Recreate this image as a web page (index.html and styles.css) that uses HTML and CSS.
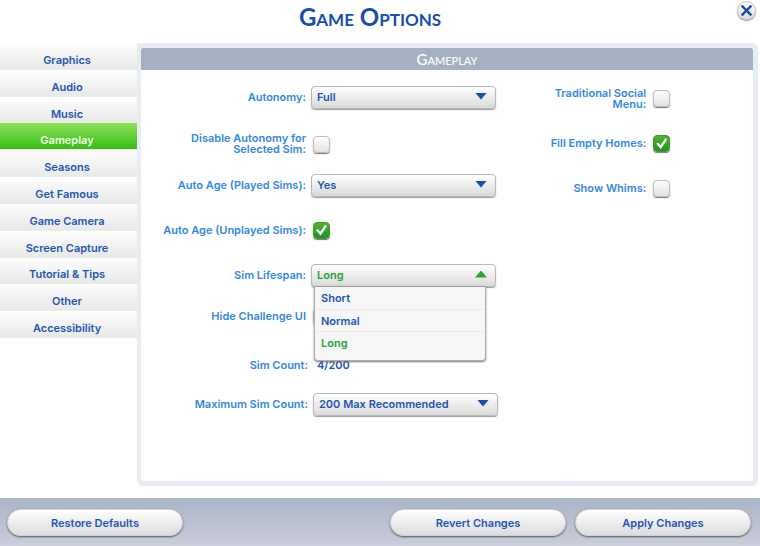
FILE: index.html
```html
<!DOCTYPE html>
<html lang="en">
<head>
  <meta charset="UTF-8" />
  <meta name="viewport" content="width=device-width, initial-scale=1.0" />
  <title>Game Options</title>
  <link rel="stylesheet" href="styles.css">
</head>
<body>
  <header>
    <h1>Game Options</h1>
    <button class="close" type="button" aria-label="Close">
      <svg width="13" height="13" viewBox="0 0 12 12"><path d="M1.5 1.5 L10.5 10.5 M10.5 1.5 L1.5 10.5" stroke="#1a4ba3" stroke-width="2.2" fill="none"/></svg>
    </button>
  </header>

  <main>
    <nav>
      <a href="#">Graphics</a>
      <a href="#">Audio</a>
      <a href="#">Music</a>
      <a href="#" class="active">Gameplay</a>
      <a href="#">Seasons</a>
      <a href="#">Get Famous</a>
      <a href="#">Game Camera</a>
      <a href="#">Screen Capture</a>
      <a href="#">Tutorial &amp; Tips</a>
      <a href="#">Other</a>
      <a href="#">Accessibility</a>
    </nav>

    <section class="panel">
      <h2>Gameplay</h2>
      <form class="options" id="options">
        <div class="main-options">
          <div class="row">
            <label for="autonomy">Autonomy:</label>
            <div class="dropdown">
              <select id="autonomy"><option>Full</option></select>
            </div>
          </div>
          <div class="row">
            <label for="disable-autonomy">Disable Autonomy for<br>Selected Sim:</label>
            <input type="checkbox" id="disable-autonomy">
          </div>
          <div class="row">
            <label for="age-played">Auto Age (Played Sims):</label>
            <div class="dropdown">
              <select id="age-played"><option>Yes</option></select>
            </div>
          </div>
          <div class="row">
            <label for="age-unplayed">Auto Age (Unplayed Sims):</label>
            <input type="checkbox" id="age-unplayed" checked>
          </div>
          <div class="row">
            <label for="lifespan">Sim Lifespan:</label>
            <div class="dropdown open">
              <select id="lifespan">
                <option>Short</option>
                <option>Normal</option>
                <option selected>Long</option>
              </select>
              <ul class="menu">
                <li>Short</li>
                <li>Normal</li>
                <li class="selected">Long</li>
              </ul>
            </div>
          </div>
          <div class="row">
            <label for="hide-challenge">Hide Challenge UI</label>
            <input type="checkbox" id="hide-challenge">
          </div>
          <div class="row count">
            <span class="label">Sim Count:</span>
            <span class="value">4/200</span>
          </div>
          <div class="row count">
            <label for="max-sims">Maximum Sim Count:</label>
            <div class="dropdown">
              <select id="max-sims"><option>200 Max Recommended</option></select>
            </div>
          </div>
        </div>

        <div class="side-options">
          <div class="row">
            <label for="social-menu">Traditional Social<br>Menu:</label>
            <input type="checkbox" id="social-menu">
          </div>
          <div class="row">
            <label for="fill-homes">Fill Empty Homes:</label>
            <input type="checkbox" id="fill-homes" checked>
          </div>
          <div class="row">
            <label for="whims">Show Whims:</label>
            <input type="checkbox" id="whims">
          </div>
        </div>
      </form>
    </section>
  </main>

  <footer>
    <button type="reset" form="options">Restore Defaults</button>
    <div class="actions">
      <button type="button">Revert Changes</button>
      <button type="submit" form="options">Apply Changes</button>
    </div>
  </footer>
</body>
</html>
```
FILE: styles.css
```css
* {
  box-sizing: border-box;
}
body {
  font-family: Inter, "Liberation Sans", sans-serif;
  font-size: 11px;
  font-weight: 600;
  margin: 0;
  min-height: 100vh;
  display: flex;
  flex-direction: column;
  background: white;
  color: #1f55b5;
}
header {
  position: relative;
  height: 43px;
  padding-right: 20px;
}
h1, h2 {
  font-family: Lato, sans-serif;
  font-variant: small-caps;
  text-align: center;
  margin: 0;
}
h1 {
  color: #144fb0;
  font-size: 24px;
  font-weight: 700;
  line-height: 34px;
}
.close {
  position: absolute;
  top: 1px;
  right: 4px;
  width: 19px;
  height: 19px;
  padding: 0;
  display: flex;
  align-items: center;
  justify-content: center;
  border: 1px solid #c4c4c4;
  border-radius: 50%;
  background: linear-gradient(#ffffff, #dedede);
  box-shadow: 0 1px 1px #888;
}
main {
  flex: 1;
  display: flex;
  margin-bottom: 12px;
}
nav {
  flex: 0 0 137px;
  min-height: 295px;
  align-self: flex-start;
  display: grid;
  grid-auto-rows: 1fr;
}
nav a {
  display: flex;
  align-items: center;
  justify-content: center;
  padding: 10px 3px 2px 0;
  line-height: 12px;
  color: #1f55b5;
  text-decoration: none;
  background: linear-gradient(#fefefe, #e9e9e9);
  border-bottom: 1px solid #e6f0e2;
}
nav a.active {
  color: #f2ffe8;
  background: linear-gradient(#8fe35c, #36bb14);
}
.panel {
  flex: 1;
  margin-right: 2px;
  border: 5px solid #e8edf4;
  border-left-width: 4px;
  border-radius: 0 6px 6px 6px;
}
h2 {
  background: #a5b1c2;
  color: white;
  font-size: 15px;
  font-weight: 500;
  line-height: 22px;
  border-radius: 2px 2px 0 0;
}
.options {
  display: grid;
  grid-template-columns: 3fr 2fr;
}
.main-options {
  display: grid;
  grid-template-rows: 48px 46px 36px 54px 36px 46px 52px 26px;
  padding-top: 3px;
}
.side-options {
  display: grid;
  grid-auto-rows: 45px;
  align-content: start;
  padding-top: 6px;
}
.row {
  display: grid;
  align-items: center;
}
.main-options .row {
  grid-template-columns: 165px 185px;
  column-gap: 5px;
}
.main-options .row.count {
  grid-template-columns: 167px 185px;
}
.side-options .row {
  grid-template-columns: 138px 1fr;
  column-gap: 5px;
}
label, .label {
  color: #3189e3;
  line-height: 11px;
  text-align: right;
}
.value {
  padding-left: 4px;
}
.dropdown {
  position: relative;
}
.dropdown::after {
  content: "";
  position: absolute;
  top: 7px;
  right: 9px;
  width: 12px;
  height: 7px;
  background: #1450b0;
  clip-path: polygon(0 0, 100% 0, 50% 100%);
  pointer-events: none;
}
.dropdown.open::after {
  background: #25a535;
  clip-path: polygon(50% 0, 100% 100%, 0 100%);
}
select {
  appearance: none;
  display: block;
  width: 100%;
  height: 23px;
  padding: 0 24px 0 5px;
  font: inherit;
  color: #1f55b5;
  border: 1px solid #b8b8b8;
  border-radius: 4px;
  background: linear-gradient(#ffffff, #dadada);
  box-shadow: 0 1px 1px #999;
}
.open select {
  color: #25a535;
}
.menu {
  position: absolute;
  z-index: 1;
  top: 22px;
  left: 3px;
  right: 10px;
  margin: 0;
  padding: 0 0 7px;
  list-style: none;
  background: #f6f6f6;
  border: 1px solid #b0b0b0;
  border-top-color: #999;
  border-radius: 0 0 4px 4px;
  box-shadow: 0 1px 2px #777;
}
.menu li {
  height: 22px;
  padding-left: 6px;
  line-height: 23px;
}
.menu li + li {
  border-top: 1px solid #ebebeb;
}
.menu .selected {
  color: #25a535;
}
input[type="checkbox"] {
  appearance: none;
  width: 17px;
  height: 17px;
  margin: 0 0 0 2px;
  border: 1px solid #bcbcbc;
  border-radius: 4px;
  background: linear-gradient(#ffffff, #e2e2e2);
  box-shadow: 0 1px 1px #777;
}
input[type="checkbox"]:checked {
  border-color: #4a8f35;
  background: linear-gradient(#50b52d, #20942a);
}
input[type="checkbox"]:checked::before {
  content: "";
  display: block;
  width: 11px;
  height: 11px;
  margin: 2px;
  background: white;
  clip-path: polygon(0 53%, 16% 40%, 39% 66%, 82% 2%, 100% 14%, 42% 100%);
}
footer {
  display: flex;
  justify-content: space-between;
  height: 48px;
  padding: 11px 9px 0 7px;
  background: linear-gradient(#a9b4c8, #cbcddb);
}
.actions {
  display: flex;
  gap: 9px;
}
footer button {
  width: 176px;
  height: 27px;
  padding: 0;
  font: inherit;
  color: #1f55b5;
  border: 1px solid #d0d0d0;
  border-radius: 14px;
  background: linear-gradient(#ffffff, #dcdcdc);
  box-shadow: 0 1px 2px #555;
}
```
